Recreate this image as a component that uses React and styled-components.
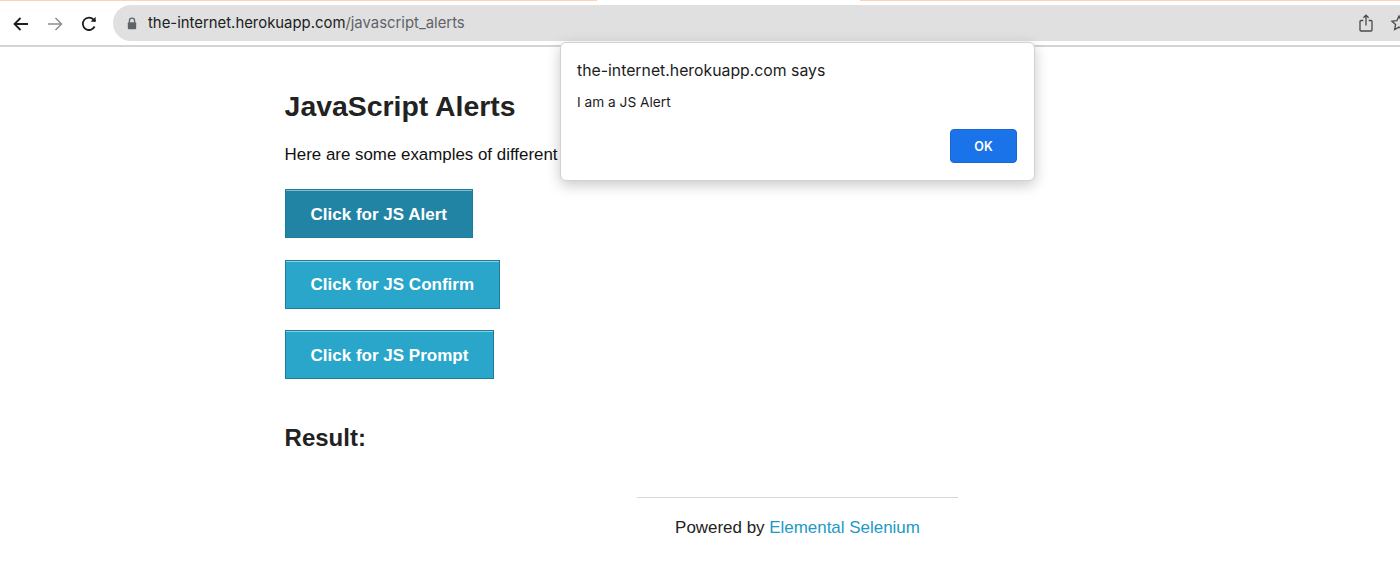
import React from 'react';
import styled, { createGlobalStyle } from 'styled-components';

const Global = createGlobalStyle`
  html, body { margin: 0; padding: 0; background: #fff; }
  body { width: 1400px; height: 566px; overflow: hidden; font-family: "Liberation Sans", Arial, sans-serif; color: #1f1f1f; }
`;

const Shell = styled.div`
  position: relative;
  width: 1400px;
  height: 566px;
  overflow: hidden;
`;

const TabStrip = styled.div`
  display: flex;
  height: 1px;
  background: #ffd2b3;
`;

const TabGap = styled.div`
  margin-left: 597px;
  width: 263px;
  background: #fff;
`;

const Toolbar = styled.div`
  display: flex;
  align-items: flex-start;
  height: 46px;
  padding-top: 4px;
  box-sizing: border-box;
  background: #fff;
  border-bottom: 2px solid #d4d4d4;
`;

const NavIcon = styled.svg`
  flex: none;
  width: 18px;
  height: 18px;
  margin-top: 10px;
  margin-left: ${p => p.$left}px;
  fill: none;
  stroke: ${p => p.$color || '#1e1e1e'};
  stroke-width: ${p => p.$weight || 1.8};
`;

const Omnibox = styled.div`
  display: flex;
  align-items: center;
  flex: none;
  width: 1400px;
  height: 36px;
  margin-left: 15px;
  padding-left: 14px;
  box-sizing: border-box;
  background: #e0e0e0;
  border-radius: 18px;
`;

const Url = styled.div`
  margin-left: 11px;
  font-family: Inter, "Liberation Sans", sans-serif;
  font-size: 14.88px;
  color: #5f6368;
  white-space: nowrap;
`;

const Host = styled.span`
  color: #202124;
`;

const OmniActions = styled.div`
  position: absolute;
  top: 14px;
  left: 1359px;
  display: flex;
  gap: 17px;
`;

const Page = styled.main`
  width: 716px;
  padding: 41px 0 0 284.6px;
`;

const Title = styled.h3`
  margin: 0;
  font-size: 28.4px;
  line-height: 36px;
  font-weight: 700;
  color: #222;
`;

const Intro = styled.p`
  margin: 19px 0 0;
  font-size: 16.9px;
  line-height: 24px;
  color: #111;
`;

const Buttons = styled.ul`
  list-style: none;
  margin: 22px 0 0;
  padding: 0;
  display: flex;
  flex-direction: column;
  align-items: flex-start;
  gap: 21.5px;
`;

const Action = styled.button`
  display: block;
  height: 49px;
  padding: 2px 25px 0;
  box-sizing: border-box;
  border: 1px solid #1d7d9e;
  box-shadow: inset 0 1px 0 rgba(255, 255, 255, 0.45);
  background: ${p => (p.$active ? '#2284a5' : '#2ba6cb')};
  color: #fff;
  font: 700 17px "Liberation Sans", Arial, sans-serif;
`;

const ResultTitle = styled.h4`
  margin: 44px 0 0;
  font-size: 24px;
  line-height: 30px;
  font-weight: 700;
  color: #222;
`;

const Footer = styled.footer`
  width: 321px;
  margin: 44px 0 0 352.400px;
  padding-top: 18px;
  border-top: 1px solid #d8d8d8;
  font-size: 16.95px;
  line-height: 24px;
  text-align: center;
  color: #222;
`;

const Link = styled.a`
  color: #2199c5;
  text-decoration: none;
`;

const Dialog = styled.div`
  position: absolute;
  top: 42px;
  left: 560px;
  width: 475px;
  height: 139px;
  padding: 19px 17px 0 16px;
  box-sizing: border-box;
  background: #fff;
  border: 1px solid #d2d2d2;
  border-radius: 6px;
  box-shadow: 0 4px 14px rgba(0, 0, 0, 0.22);
  font-family: Inter, "Liberation Sans", sans-serif;
  color: #1c1c1e;
`;

const DialogTitle = styled.div`
  font-size: 15.8px;
  line-height: 18px;
`;

const DialogText = styled.div`
  margin-top: 14px;
  font-size: 13.7px;
  line-height: 16px;
`;

const DialogActions = styled.div`
  display: flex;
  justify-content: flex-end;
  margin-top: 19px;
`;

const OkButton = styled.button`
  width: 67px;
  height: 34px;
  padding: 0;
  background: #1a73e8;
  border: 1px solid #1967d2;
  border-radius: 4px;
  color: #fff;
  font: 600 12.5px Inter, "Liberation Sans", sans-serif;
`;

export default function App() {
  return (
    <Shell>
      <Global />
      <TabStrip><TabGap /></TabStrip>
      <Toolbar>
        <NavIcon $left={12} viewBox="0 0 18 18">
          <path d="M16 9H2.500M8.500 3L2.500 9l6 6" />
        </NavIcon>
        <NavIcon $left={16} $color="#8e8e8e" $weight={1.5} viewBox="0 0 18 18">
          <path d="M2 9h13.500M9.500 3l6 6-6 6" />
        </NavIcon>
        <NavIcon $left={16} viewBox="0 0 18 18">
          <path d="M14.600 11.500A6.200 6.200 0 1 1 13.600 4.600L15.400 6.400" />
          <path d="M15.600 1.800v5h-5" fill="#1e1e1e" stroke="none" />
        </NavIcon>
        <Omnibox>
          <svg width="10" height="13" viewBox="0 0 10 13">
            <path d="M2.400 5.500V3.800a2.600 2.600 0 0 1 5.200 0v1.700" fill="none" stroke="#5f6368" strokeWidth="1.3" />
            <rect x="0.800" y="5.200" width="8.400" height="7" rx="1" fill="#5f6368" />
          </svg>
          <Url><Host>the-internet.herokuapp.com</Host>/javascript_alerts</Url>
        </Omnibox>
        <OmniActions>
          <svg width="14" height="18" viewBox="0 0 14 18" fill="none" stroke="#4a4a4a" strokeWidth="1.3">
            <path d="M4.300 6.500H2a1 1 0 0 0-1 1V16a1 1 0 0 0 1 1h10a1 1 0 0 0 1-1V7.500a1 1 0 0 0-1-1H9.700" />
            <path d="M7 11.500V1.500M4.400 3.800 7 1.200l2.600 2.600" />
          </svg>
          <svg width="18" height="18" viewBox="0 0 18 18" fill="none" stroke="#4a4a4a" strokeWidth="1.3">
            <path d="M9 2l2.100 4.600 5 .6-3.700 3.400 1 5L9 13.100l-4.400 2.500 1-5L1.900 7.200l5-.6z" />
          </svg>
        </OmniActions>
      </Toolbar>
      <Page>
        <Title>JavaScript Alerts</Title>
        <Intro>Here are some examples of different types of JavaScript alerts.</Intro>
        <Buttons>
          <li><Action $active>Click for JS Alert</Action></li>
          <li><Action>Click for JS Confirm</Action></li>
          <li><Action>Click for JS Prompt</Action></li>
        </Buttons>
        <ResultTitle>Result:</ResultTitle>
        <Footer>Powered by <Link href="#">Elemental Selenium</Link></Footer>
      </Page>
      <Dialog>
        <DialogTitle>the-internet.herokuapp.com says</DialogTitle>
        <DialogText>I am a JS Alert</DialogText>
        <DialogActions><OkButton>OK</OkButton></DialogActions>
      </Dialog>
    </Shell>
  );
}
